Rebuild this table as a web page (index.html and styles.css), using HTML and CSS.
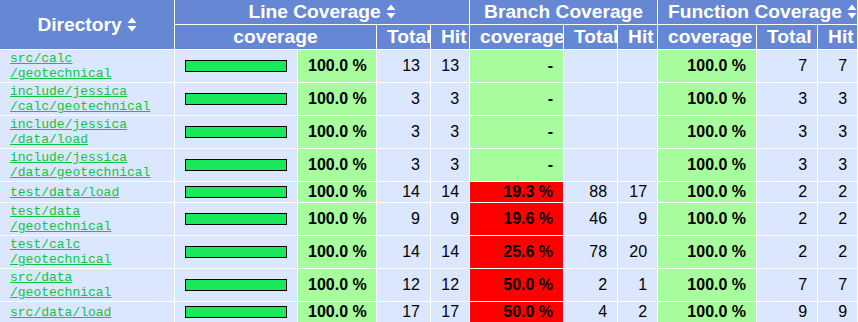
FILE: index.html
```html
<!DOCTYPE html>
<html>
<head>
<meta charset="utf-8">
<link rel="stylesheet" href="styles.css">
</head>
<body>
<table class="cov">
  <colgroup>
    <col class="c-dir"><col class="c-bar"><col class="c-per"><col class="c-tot"><col class="c-hit">
    <col class="c-bper"><col class="c-tot"><col class="c-bhit">
    <col class="c-fper"><col class="c-ftot"><col class="c-fhit">
  </colgroup>
  <thead>
    <tr>
      <th class="head" rowspan="2">Directory<svg class="sort" viewBox="0 0 10 15"><path d="M5 0.5 L9.5 6 H0.5 Z M5 14.5 L9.5 9 H0.5 Z"/></svg></th>
      <th class="head" colspan="4">Line Coverage<svg class="sort" viewBox="0 0 10 15"><path d="M5 0.5 L9.5 6 H0.5 Z M5 14.5 L9.5 9 H0.5 Z"/></svg></th>
      <th class="head" colspan="3">Branch Coverage</th>
      <th class="head" colspan="3">Function Coverage<svg class="sort" viewBox="0 0 10 15"><path d="M5 0.5 L9.5 6 H0.5 Z M5 14.5 L9.5 9 H0.5 Z"/></svg></th>
    </tr>
    <tr>
      <th class="head" colspan="2">coverage</th>
      <th class="head">Total</th>
      <th class="head">Hit</th>
      <th class="head">coverage</th>
      <th class="head">Total</th>
      <th class="head">Hit</th>
      <th class="head">coverage</th>
      <th class="head">Total</th>
      <th class="head">Hit</th>
    </tr>
  </thead>
  <tbody>
    <tr>
      <td class="file"><a href="#">src/calc<br>/geotechnical</a></td>
      <td class="barcell"><div class="bar"></div></td>
      <td class="per hi">100.0 %</td><td class="num">13</td><td class="num">13</td>
      <td class="per hi">-</td><td class="num"></td><td class="num"></td>
      <td class="per hi">100.0 %</td><td class="num">7</td><td class="num">7</td>
    </tr>
    <tr>
      <td class="file"><a href="#">include/jessica<br>/calc/geotechnical</a></td>
      <td class="barcell"><div class="bar"></div></td>
      <td class="per hi">100.0 %</td><td class="num">3</td><td class="num">3</td>
      <td class="per hi">-</td><td class="num"></td><td class="num"></td>
      <td class="per hi">100.0 %</td><td class="num">3</td><td class="num">3</td>
    </tr>
    <tr>
      <td class="file"><a href="#">include/jessica<br>/data/load</a></td>
      <td class="barcell"><div class="bar"></div></td>
      <td class="per hi">100.0 %</td><td class="num">3</td><td class="num">3</td>
      <td class="per hi">-</td><td class="num"></td><td class="num"></td>
      <td class="per hi">100.0 %</td><td class="num">3</td><td class="num">3</td>
    </tr>
    <tr>
      <td class="file"><a href="#">include/jessica<br>/data/geotechnical</a></td>
      <td class="barcell"><div class="bar"></div></td>
      <td class="per hi">100.0 %</td><td class="num">3</td><td class="num">3</td>
      <td class="per hi">-</td><td class="num"></td><td class="num"></td>
      <td class="per hi">100.0 %</td><td class="num">3</td><td class="num">3</td>
    </tr>
    <tr>
      <td class="file"><a href="#">test/data/load</a></td>
      <td class="barcell"><div class="bar"></div></td>
      <td class="per hi">100.0 %</td><td class="num">14</td><td class="num">14</td>
      <td class="per lo">19.3 %</td><td class="num">88</td><td class="num">17</td>
      <td class="per hi">100.0 %</td><td class="num">2</td><td class="num">2</td>
    </tr>
    <tr>
      <td class="file"><a href="#">test/data<br>/geotechnical</a></td>
      <td class="barcell"><div class="bar"></div></td>
      <td class="per hi">100.0 %</td><td class="num">9</td><td class="num">9</td>
      <td class="per lo">19.6 %</td><td class="num">46</td><td class="num">9</td>
      <td class="per hi">100.0 %</td><td class="num">2</td><td class="num">2</td>
    </tr>
    <tr>
      <td class="file"><a href="#">test/calc<br>/geotechnical</a></td>
      <td class="barcell"><div class="bar"></div></td>
      <td class="per hi">100.0 %</td><td class="num">14</td><td class="num">14</td>
      <td class="per lo">25.6 %</td><td class="num">78</td><td class="num">20</td>
      <td class="per hi">100.0 %</td><td class="num">2</td><td class="num">2</td>
    </tr>
    <tr>
      <td class="file"><a href="#">src/data<br>/geotechnical</a></td>
      <td class="barcell"><div class="bar"></div></td>
      <td class="per hi">100.0 %</td><td class="num">12</td><td class="num">12</td>
      <td class="per lo">50.0 %</td><td class="num">2</td><td class="num">1</td>
      <td class="per hi">100.0 %</td><td class="num">7</td><td class="num">7</td>
    </tr>
    <tr>
      <td class="file"><a href="#">src/data/load</a></td>
      <td class="barcell"><div class="bar"></div></td>
      <td class="per hi">100.0 %</td><td class="num">17</td><td class="num">17</td>
      <td class="per lo">50.0 %</td><td class="num">4</td><td class="num">2</td>
      <td class="per hi">100.0 %</td><td class="num">9</td><td class="num">9</td>
    </tr>
  </tbody>
</table>
</body>
</html>
```
FILE: styles.css
```css
html, body {
  margin: 0;
  padding: 0;
  background: #ffffff;
  overflow: hidden;
}

.cov {
  table-layout: fixed;
  border-collapse: separate;
  border-spacing: 0;
  width: 858px;
  font-family: "Liberation Sans", Arial, sans-serif;
  font-size: 16px;
}

.c-dir { width: 175px; }
.c-bar { width: 123px; }
.c-per { width: 79px; }
.c-tot { width: 54px; }
.c-hit { width: 39px; }
.c-bper { width: 94px; }
.c-bhit { width: 40px; }
.c-fper { width: 99px; }
.c-ftot { width: 61px; }
.c-fhit { width: 40px; }

.cov th,
.cov td {
  border-right: 1px solid #ffffff;
  border-bottom: 1px solid #ffffff;
  padding: 1px 10px;
  vertical-align: middle;
  white-space: nowrap;
  overflow: hidden;
}

.head {
  background: #6688d4;
  color: #ffffff;
  font-weight: bold;
  font-size: 19.2px;
  line-height: 22px;
  text-align: center;
  padding: 1px 4px;
}

.sort {
  width: 10px;
  height: 15px;
  margin-left: 5px;
  vertical-align: -1px;
  fill: #ffffff;
}

.file {
  background: #dae7fe;
  text-align: left;
  font-family: "Liberation Mono", "Courier New", monospace;
  font-size: 13px;
  line-height: 15px;
}

.file a {
  color: #10c444;
  text-decoration: underline;
}

.barcell {
  background: #dae7fe;
  line-height: 18px;
}

.bar {
  width: 100px;
  height: 10px;
  border: 1px solid #000000;
  background: #1ae85a;
}

.per {
  text-align: right;
  font-weight: bold;
  line-height: 18px;
}

.hi { background: #a7fc9d; }
.lo { background: #ff0000; }

.num {
  background: #dae7fe;
  text-align: right;
  line-height: 18px;
}
```
